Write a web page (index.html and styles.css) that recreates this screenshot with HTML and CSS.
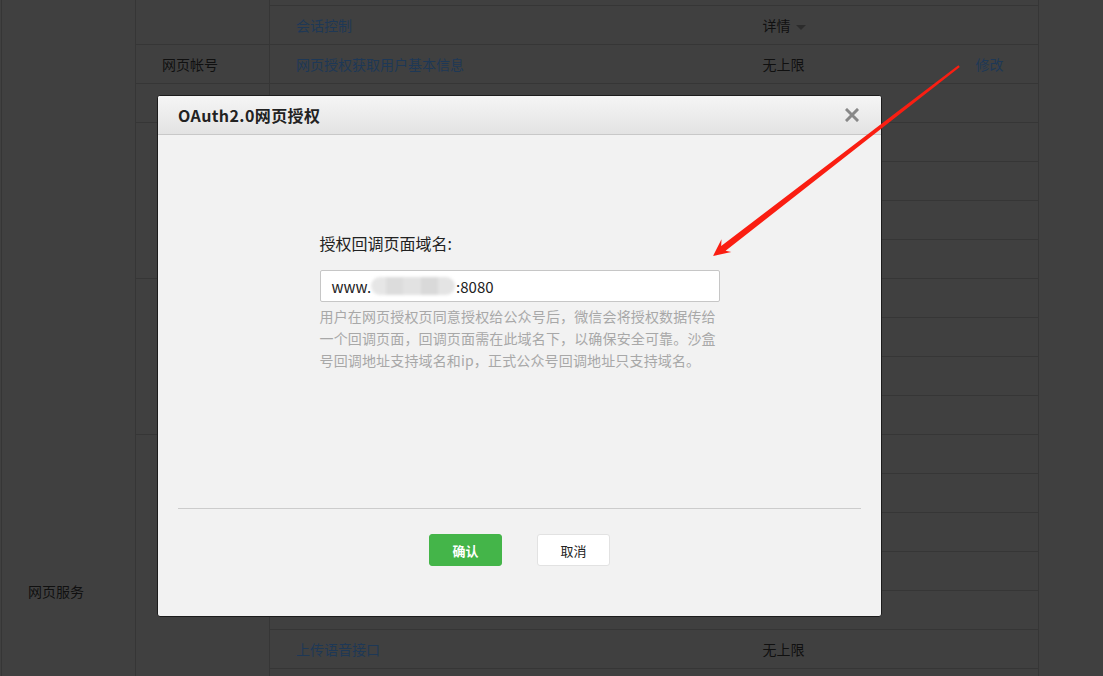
FILE: index.html
```html
<!DOCTYPE html>
<html lang="zh-CN">
<head>
    <meta charset="UTF-8">
    <meta name="viewport" content="width=device-width, initial-scale=1.0">
    <title>OAuth2.0网页授权</title>
    <link rel="stylesheet" href="styles.css">
</head>
<body>
    <table class="api-table">
        <colgroup>
            <col class="col-cat">
            <col class="col-group">
            <col class="col-name">
            <col class="col-limit">
            <col class="col-op">
        </colgroup>
        <tr class="row-top">
            <td class="cell-cat" rowspan="2"></td>
            <td class="cell-group" rowspan="2"></td>
            <td></td><td></td><td></td>
        </tr>
        <tr>
            <td><a class="link">会话控制</a></td>
            <td>详情 <span class="caret"></span></td>
            <td></td>
        </tr>
        <tr>
            <td class="cell-cat" rowspan="28">网页服务</td>
            <td class="cell-group">网页帐号</td>
            <td><a class="link">网页授权获取用户基本信息</a></td>
            <td>无上限</td>
            <td><a class="link">修改</a></td>
        </tr>
        <tr><td class="cell-group"></td><td></td><td></td><td></td></tr>
        <tr><td class="cell-group" rowspan="4"></td><td></td><td></td><td></td></tr>
        <tr><td></td><td></td><td></td></tr>
        <tr><td></td><td></td><td></td></tr>
        <tr><td></td><td></td><td></td></tr>
        <tr><td class="cell-group" rowspan="4"></td><td></td><td></td><td></td></tr>
        <tr><td></td><td></td><td></td></tr>
        <tr><td></td><td></td><td></td></tr>
        <tr><td></td><td></td><td></td></tr>
        <tr><td class="cell-group" rowspan="18"></td><td></td><td></td><td></td></tr>
        <tr><td></td><td></td><td></td></tr>
        <tr><td></td><td></td><td></td></tr>
        <tr><td></td><td></td><td></td></tr>
        <tr><td></td><td></td><td></td></tr>
        <tr>
            <td><a class="link">上传语音接口</a></td>
            <td>无上限</td>
            <td></td>
        </tr>
        <tr><td></td><td></td><td></td></tr>
        <tr><td></td><td></td><td></td></tr>
        <tr><td></td><td></td><td></td></tr>
        <tr><td></td><td></td><td></td></tr>
        <tr><td></td><td></td><td></td></tr>
        <tr><td></td><td></td><td></td></tr>
        <tr><td></td><td></td><td></td></tr>
        <tr><td></td><td></td><td></td></tr>
        <tr><td></td><td></td><td></td></tr>
        <tr><td></td><td></td><td></td></tr>
        <tr><td></td><td></td><td></td></tr>
        <tr><td></td><td></td><td></td></tr>
    </table>

    <div class="dialog">
        <div class="dialog-head">
            <h3 class="dialog-title">OAuth2.0网页授权</h3>
            <span class="dialog-close">
                <svg width="14" height="14" viewBox="0 0 14 14">
                    <path d="M2 2 L12 12 M12 2 L2 12" stroke="#888" stroke-width="3" stroke-linecap="square"/>
                </svg>
            </span>
        </div>
        <div class="dialog-body">
            <div class="form-block">
                <label class="form-label">授权回调页面域名:</label>
                <div class="form-input">www.<span class="masked"></span>:8080</div>
                <p class="form-tips">用户在网页授权页同意授权给公众号后，微信会将授权数据传给<br>一个回调页面，回调页面需在此域名下，以确保安全可靠。沙盒<br>号回调地址支持域名和ip，正式公众号回调地址只支持域名。</p>
            </div>
        </div>
        <div class="dialog-foot">
            <button class="btn btn-primary">确认</button>
            <button class="btn btn-default">取消</button>
        </div>
    </div>

    <svg class="mark-arrow" width="1103" height="676" viewBox="0 0 1103 676">
        <polygon fill="#fa1e12" points="958.4,65.2 721.2,246 721.5,239.3 713,256 731.3,251.9 725.6,250.8 959.8,66.9"/>
    </svg>
</body>
</html>
```

FILE: styles.css
```css
html, body {
    margin: 0;
    height: 676px;
    overflow: hidden;
}
body {
    background-color: #404040;
    font-family: "Noto Sans CJK SC", "Liberation Sans", sans-serif;
    font-size: 14px;
    color: #101010;
}

.api-table {
    margin-left: 1px;
    border-collapse: collapse;
    table-layout: fixed;
    width: 1038px;
    border-left: 1px solid #363636;
    border-right: 1px solid #363636;
}
.col-cat { width: 134px; }
.col-group { width: 134px; }
.col-name { width: 467px; }
.col-limit { width: 213px; }
.col-op { width: 89px; }
.api-table td {
    height: 38px;
    padding: 0 0 0 26px;
    border-bottom: 1px solid #363636;
    white-space: nowrap;
    line-height: 20px;
}
.api-table .row-top td {
    height: 5px;
}
.api-table .cell-cat {
    border-right: 1px solid #363636;
    border-bottom: 0;
}
.api-table .cell-group {
    border-right: 1px solid #363636;
}
.link {
    color: #1e3856;
}
.caret {
    display: inline-block;
    margin-left: 2px;
    vertical-align: middle;
    border-top: 5px solid #2c2c2c;
    border-left: 5px solid transparent;
    border-right: 5px solid transparent;
}

/* dialog */
.dialog {
    position: fixed;
    left: 157px;
    top: 95px;
    width: 723px;
    border: 1px solid #1c1c1c;
    border-radius: 3px;
    background-color: #f2f2f2;
    overflow: hidden;
}
.dialog-head {
    display: flex;
    align-items: center;
    justify-content: space-between;
    height: 38px;
    padding: 0 20px;
    background: linear-gradient(#f5f5f5, #e3e3e3);
    border-bottom: 1px solid #c8c8c8;
}
.dialog-title {
    margin: 0;
    font-size: 16px;
    font-weight: bold;
    color: #222;
    letter-spacing: 0.4px;
}
.dialog-close {
    display: flex;
    margin-right: 2px;
}
.dialog-body {
    height: 373px;
    display: flex;
    justify-content: center;
}
.form-block {
    width: 400px;
    padding-top: 97px;
}
.form-label {
    display: block;
    font-size: 16px;
    line-height: 22px;
    color: #222;
    margin-bottom: 16px;
}
.form-input {
    display: flex;
    align-items: center;
    height: 30px;
    padding: 0 11px;
    background-color: #fff;
    border: 1px solid #c6c6c6;
    border-radius: 2px;
    color: #222;
    font-size: 15px;
}
.masked {
    width: 84px;
    height: 18px;
    margin-right: 1px;
    border-radius: 9px;
    background: linear-gradient(90deg, #e6e6e6 0 18%, #dcdcdc 18% 38%, #e2e2e2 38% 60%, #d9d9d9 60% 80%, #e4e4e4 80%);
    filter: blur(1.5px);
}
.form-tips {
    margin: 3px 0 0;
    font-size: 14px;
    line-height: 22px;
    letter-spacing: 0.15px;
    white-space: nowrap;
    color: #a8a8a8;
}
.dialog-foot {
    display: flex;
    justify-content: center;
    gap: 35px;
    margin: 0 20px;
    padding: 25px 0 50px;
    border-top: 1px solid #cccccc;
}
.btn {
    height: 32px;
    width: 73px;
    border-radius: 3px;
    font-family: inherit;
    font-size: 13px;
    cursor: pointer;
}
.btn-primary {
    background-color: #44b549;
    border: 1px solid #44b549;
    color: #fff;
    font-weight: bold;
}
.btn-default {
    background-color: #fff;
    border: 1px solid #e2e2e2;
    color: #222;
}

/* red annotation arrow */
.mark-arrow {
    position: fixed;
    left: 0;
    top: 0;
    pointer-events: none;
}
```
